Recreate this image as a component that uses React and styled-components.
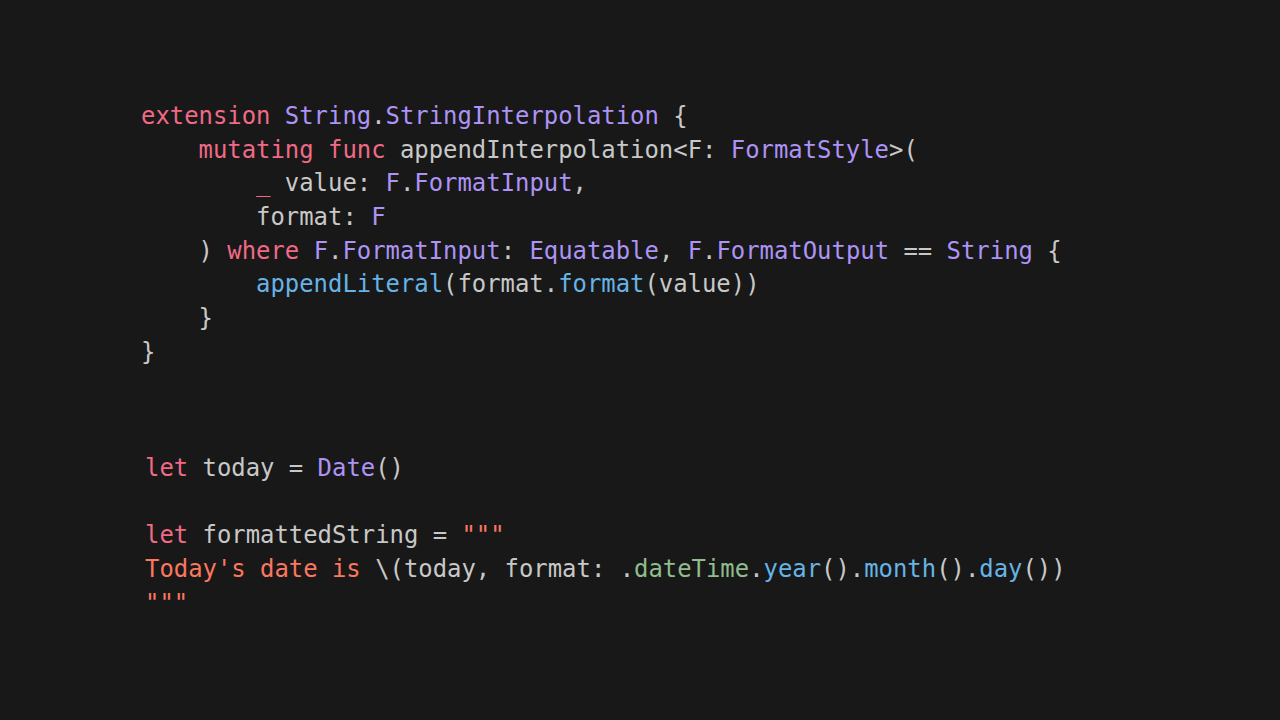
import React from "react";
import styled, { createGlobalStyle } from "styled-components";

const GlobalStyle = createGlobalStyle`
  html, body {
    margin: 0;
    padding: 0;
    background: #181818;
  }
  #root {
    min-height: 720px;
  }
`;

const palette = {
  keyword: "#f06a86",
  type: "#ad93f5",
  plain: "#c8c8c8",
  method: "#66b4e6",
  string: "#fb775f",
  member: "#8fbd8b",
};

const Page = styled.main`
  box-sizing: border-box;
  width: 1280px;
  height: 720px;
  background: #181818;
  display: flex;
  flex-direction: column;
  padding-top: 100px;
  gap: 82.4px;
`;

const CodeBlock = styled.pre`
  margin: 0;
  padding-left: ${(p) => p.$indent}px;
  font-family: "DejaVu Sans Mono", "Liberation Mono", monospace;
  font-size: 23.9px;
  line-height: 33.7px;
  color: ${palette.plain};
  white-space: pre;
`;

const Line = styled.div`
  height: 33.7px;
`;

const Tok = styled.span`
  color: ${(p) => palette[p.$tone] || palette.plain};
`;

const K = ({ children }) => <Tok $tone="keyword">{children}</Tok>;
const T = ({ children }) => <Tok $tone="type">{children}</Tok>;
const M = ({ children }) => <Tok $tone="method">{children}</Tok>;
const S = ({ children }) => <Tok $tone="string">{children}</Tok>;
const G = ({ children }) => <Tok $tone="member">{children}</Tok>;

export default function App() {
  return (
    <>
      <GlobalStyle />
      <Page>
        <CodeBlock $indent={141}>
          <Line>
            <K>extension</K> <T>String</T>.<T>StringInterpolation</T> {"{"}
          </Line>
          <Line>
            {"    "}
            <K>mutating</K> <K>func</K> appendInterpolation{"<"}F: <T>FormatStyle</T>{">("}
          </Line>
          <Line>
            {"        "}
            <K>_</K> value: <T>F</T>.<T>FormatInput</T>,
          </Line>
          <Line>
            {"        "}format: <T>F</T>
          </Line>
          <Line>
            {"    "}) <K>where</K> <T>F</T>.<T>FormatInput</T>: <T>Equatable</T>, <T>F</T>.
            <T>FormatOutput</T> == <T>String</T> {"{"}
          </Line>
          <Line>
            {"        "}
            <M>appendLiteral</M>(format.<M>format</M>(value))
          </Line>
          <Line>{"    }"}</Line>
          <Line>{"}"}</Line>
        </CodeBlock>
        <CodeBlock $indent={145}>
          <Line>
            <K>let</K> today = <T>Date</T>()
          </Line>
          <Line />
          <Line>
            <K>let</K> formattedString = <S>{'"""'}</S>
          </Line>
          <Line>
            <S>Today's date is </S>\(today, format: .<G>dateTime</G>.<M>year</M>().<M>month</M>().
            <M>day</M>())
          </Line>
          <Line>
            <S>{'"""'}</S>
          </Line>
        </CodeBlock>
      </Page>
    </>
  );
}
